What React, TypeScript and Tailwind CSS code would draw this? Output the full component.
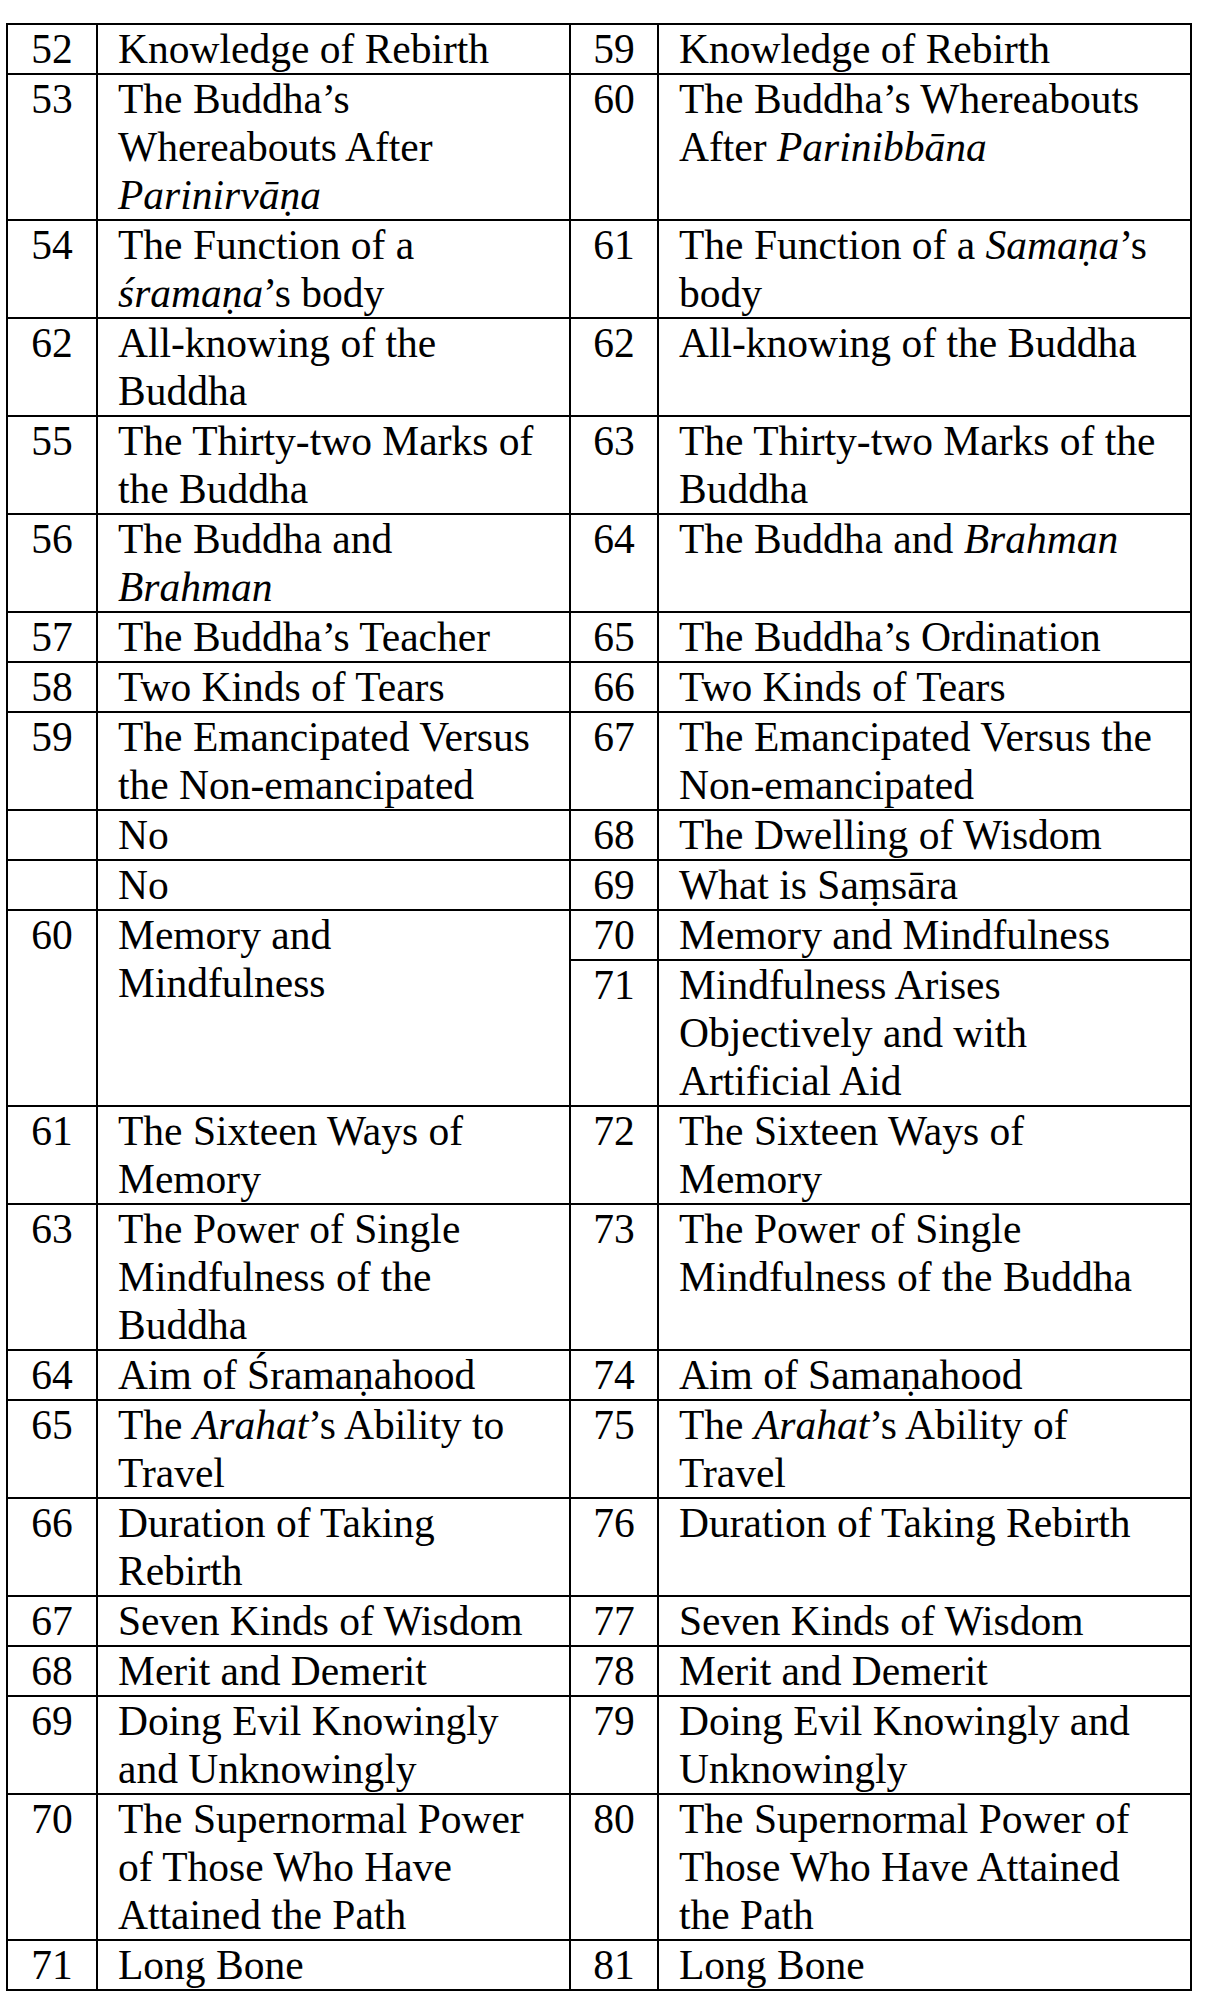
import type { ReactNode } from "react";

type Row = {
  leftNo: string;
  left: ReactNode;
  rightNo: string;
  right: ReactNode;
};

const rows: Row[] = [
  { leftNo: "52", left: "Knowledge of Rebirth", rightNo: "59", right: "Knowledge of Rebirth" },
  {
    leftNo: "53",
    left: (
      <>
        The Buddha’s
        <br />
        Whereabouts After
        <br />
        <i>Parinirvāṇa</i>
      </>
    ),
    rightNo: "60",
    right: (
      <>
        The Buddha’s Whereabouts
        <br />
        After <i>Parinibbāna</i>
      </>
    ),
  },
  {
    leftNo: "54",
    left: (
      <>
        The Function of a
        <br />
        <i>śramaṇa</i>’s body
      </>
    ),
    rightNo: "61",
    right: (
      <>
        The Function of a <i>Samaṇa</i>’s
        <br />
        body
      </>
    ),
  },
  {
    leftNo: "62",
    left: (
      <>
        All-knowing of the
        <br />
        Buddha
      </>
    ),
    rightNo: "62",
    right: "All-knowing of the Buddha",
  },
  {
    leftNo: "55",
    left: (
      <>
        The Thirty-two Marks of
        <br />
        the Buddha
      </>
    ),
    rightNo: "63",
    right: (
      <>
        The Thirty-two Marks of the
        <br />
        Buddha
      </>
    ),
  },
  {
    leftNo: "56",
    left: (
      <>
        The Buddha and
        <br />
        <i>Brahman</i>
      </>
    ),
    rightNo: "64",
    right: (
      <>
        The Buddha and <i>Brahman</i>
      </>
    ),
  },
  { leftNo: "57", left: "The Buddha’s Teacher", rightNo: "65", right: "The Buddha’s Ordination" },
  { leftNo: "58", left: "Two Kinds of Tears", rightNo: "66", right: "Two Kinds of Tears" },
  {
    leftNo: "59",
    left: (
      <>
        The Emancipated Versus
        <br />
        the Non-emancipated
      </>
    ),
    rightNo: "67",
    right: (
      <>
        The Emancipated Versus the
        <br />
        Non-emancipated
      </>
    ),
  },
  { leftNo: "", left: "No", rightNo: "68", right: "The Dwelling of Wisdom" },
  { leftNo: "", left: "No", rightNo: "69", right: "What is Saṃsāra" },
];

const rowsAfter: Row[] = [
  {
    leftNo: "61",
    left: (
      <>
        The Sixteen Ways of
        <br />
        Memory
      </>
    ),
    rightNo: "72",
    right: (
      <>
        The Sixteen Ways of
        <br />
        Memory
      </>
    ),
  },
  {
    leftNo: "63",
    left: (
      <>
        The Power of Single
        <br />
        Mindfulness of the
        <br />
        Buddha
      </>
    ),
    rightNo: "73",
    right: (
      <>
        The Power of Single
        <br />
        Mindfulness of the Buddha
      </>
    ),
  },
  { leftNo: "64", left: "Aim of Śramaṇahood", rightNo: "74", right: "Aim of Samaṇahood" },
  {
    leftNo: "65",
    left: (
      <>
        The <i>Arahat</i>’s Ability to
        <br />
        Travel
      </>
    ),
    rightNo: "75",
    right: (
      <>
        The <i>Arahat</i>’s Ability of
        <br />
        Travel
      </>
    ),
  },
  {
    leftNo: "66",
    left: (
      <>
        Duration of Taking
        <br />
        Rebirth
      </>
    ),
    rightNo: "76",
    right: "Duration of Taking Rebirth",
  },
  { leftNo: "67", left: "Seven Kinds of Wisdom", rightNo: "77", right: "Seven Kinds of Wisdom" },
  { leftNo: "68", left: "Merit and Demerit", rightNo: "78", right: "Merit and Demerit" },
  {
    leftNo: "69",
    left: (
      <>
        Doing Evil Knowingly
        <br />
        and Unknowingly
      </>
    ),
    rightNo: "79",
    right: (
      <>
        Doing Evil Knowingly and
        <br />
        Unknowingly
      </>
    ),
  },
  {
    leftNo: "70",
    left: (
      <>
        The Supernormal Power
        <br />
        of Those Who Have
        <br />
        Attained the Path
      </>
    ),
    rightNo: "80",
    right: (
      <>
        The Supernormal Power of
        <br />
        Those Who Have Attained
        <br />
        the Path
      </>
    ),
  },
  { leftNo: "71", left: "Long Bone", rightNo: "81", right: "Long Bone" },
];

const noCell = "border-2 border-black p-0 text-center align-top";
const textCell = "border-2 border-black py-0 pl-[20px] pr-[20px] align-top whitespace-nowrap";

function TableRow({ row }: { row: Row }) {
  return (
    <tr>
      <td className={noCell}>{row.leftNo}</td>
      <td className={textCell}>{row.left}</td>
      <td className={noCell}>{row.rightNo}</td>
      <td className={textCell}>{row.right}</td>
    </tr>
  );
}

export default function App() {
  return (
    <div className="min-h-[2004px] w-[1210px] bg-white pt-[23px] pl-[6px] font-['Liberation_Serif','Times_New_Roman',serif] text-[41.5px] leading-[48px] text-black">
      <table className="w-[1184px] table-fixed border-collapse">
        <colgroup>
          <col className="w-[90px]" />
          <col className="w-[473px]" />
          <col className="w-[88px]" />
          <col className="w-[533px]" />
        </colgroup>
        <tbody>
          {rows.map((row, i) => (
            <TableRow key={`a${i}`} row={row} />
          ))}
          <tr>
            <td rowSpan={2} className={noCell}>
              60
            </td>
            <td rowSpan={2} className={textCell}>
              Memory and
              <br />
              Mindfulness
            </td>
            <td className={noCell}>70</td>
            <td className={textCell}>Memory and Mindfulness</td>
          </tr>
          <tr>
            <td className={noCell}>71</td>
            <td className={textCell}>
              Mindfulness Arises
              <br />
              Objectively and with
              <br />
              Artificial Aid
            </td>
          </tr>
          {rowsAfter.map((row, i) => (
            <TableRow key={`b${i}`} row={row} />
          ))}
        </tbody>
      </table>
    </div>
  );
}
